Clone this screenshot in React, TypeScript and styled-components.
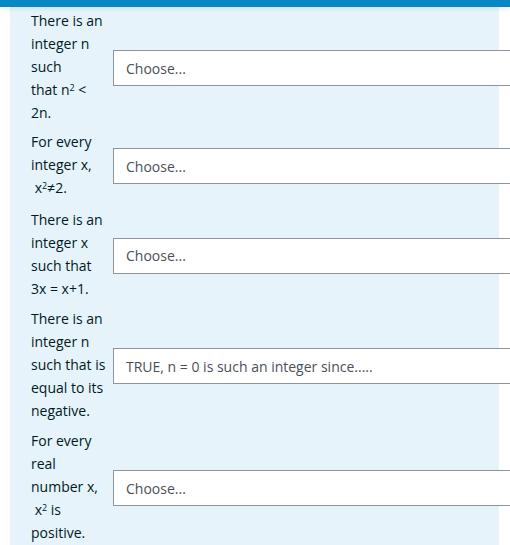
import styled, { createGlobalStyle } from "styled-components";

const GlobalStyle = createGlobalStyle`
  html, body {
    margin: 0;
    padding: 0;
    overflow: hidden;
    background: #ffffff;
  }
  body {
    font-family: "Open Sans", "Noto Sans", sans-serif;
    font-size: 14px;
  }
`;

const TopBar = styled.div`
  position: relative;
  z-index: 1;
  height: 7px;
  background: #0588c3;
  box-shadow: 0 2px 4px rgba(0, 0, 0, 0.08);
`;

const Formulation = styled.div`
  margin-left: 10px;
  width: 468px;
  padding: 2px 0 10px 21px;
  background: #e6f3fa;
  color: #001a1e;
`;

const Row = styled.div<{ $space: number }>`
  display: flex;
  align-items: center;
  gap: 8px;
  padding-bottom: ${(p) => p.$space}px;
`;

const Label = styled.div`
  flex: none;
  width: 74px;
  line-height: 23px;
  white-space: nowrap;

  & > div {
    height: 23px;
  }

  sup {
    position: relative;
    top: -0.5em;
    font-size: 9px;
    line-height: 0;
    vertical-align: baseline;
  }
`;

const Select = styled.select`
  flex: none;
  appearance: none;
  width: 460px;
  height: 36px;
  margin-top: 3px;
  padding: 0 12px;
  border: 1px solid #8f959e;
  border-radius: 0;
  background: #ffffff;
  color: #495057;
  font-family: inherit;
  font-size: 14px;
`;

type Item = { lines: React.ReactNode[]; answer: string; space: number };

const items: Item[] = [
  {
    lines: ["There is an", "integer n", "such", <>that n<sup>2</sup> &lt;</>, "2n."],
    answer: "Choose...",
    space: 6,
  },
  {
    lines: ["For every", "integer x,", <>&nbsp;x<sup>2</sup>≠2.</>],
    answer: "Choose...",
    space: 9,
  },
  {
    lines: ["There is an", "integer x", "such that", "3x = x+1."],
    answer: "Choose...",
    space: 7,
  },
  {
    lines: ["There is an", "integer n", "such that is", "equal to its", "negative."],
    answer: "TRUE, n = 0 is such an integer since.....",
    space: 7,
  },
  {
    lines: ["For every", "real", "number x,", <>&nbsp;x<sup>2</sup> is</>, "positive."],
    answer: "Choose...",
    space: 0,
  },
];

export default function App() {
  return (
    <>
      <GlobalStyle />
      <TopBar />
      <Formulation>
        {items.map((item, i) => (
          <Row key={i} $space={item.space}>
            <Label>
              {item.lines.map((line, j) => (
                <div key={j}>{line}</div>
              ))}
            </Label>
            <Select defaultValue={item.answer}>
              <option>{item.answer}</option>
            </Select>
          </Row>
        ))}
      </Formulation>
    </>
  );
}
